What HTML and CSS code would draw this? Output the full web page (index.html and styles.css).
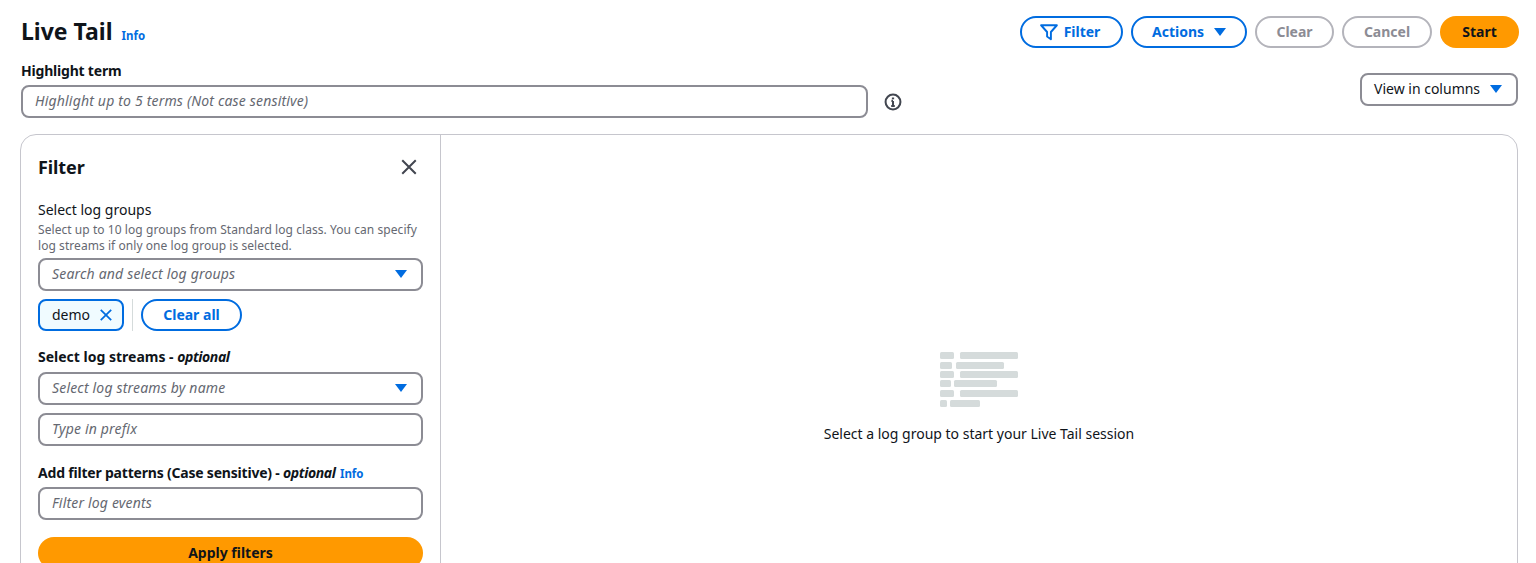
FILE: index.html
```html
<!DOCTYPE html>
<html lang="en">
<head>
<meta charset="utf-8">
<title>Live Tail</title>
<link rel="stylesheet" href="styles.css">
</head>
<body>
<div class="page">
  <header class="top">
    <div class="title-wrap">
      <h1>Live Tail</h1>
      <a class="info info-head">Info</a>
    </div>
    <div class="actions">
      <button class="btn btn-blue btn-filter">
        <svg width="18" height="18" viewBox="0 0 16 16" fill="none" stroke="#006ce0" stroke-width="1.7" stroke-linejoin="round"><path d="M1 2h14L9.7 8v6.4L6.3 12V8z"/></svg>
        Filter
      </button>
      <button class="btn btn-blue btn-actions">Actions <span class="caret"></span></button>
      <button class="btn btn-off btn-clear">Clear</button>
      <button class="btn btn-off btn-cancel">Cancel</button>
      <button class="btn btn-primary btn-start">Start</button>
    </div>
  </header>
  <section class="highlight">
    <div class="hl-left">
      <label class="lbl-strong">Highlight term</label>
      <div class="hl-row">
        <div class="input hl-input">Highlight up to 5 terms (Not case sensitive)</div>
        <svg class="info-icon" width="18" height="18" viewBox="0 0 16 16" fill="none" stroke="#424650" stroke-width="1.8"><circle cx="8" cy="8" r="6.6"/><path d="M8 7v4.5M6.4 11.5h3.2M6.6 7H8"/><path d="M8 4v1.6" stroke-width="2"/></svg>
      </div>
    </div>
    <div class="view-select">View in columns <span class="caret"></span></div>
  </section>
  <main class="panel">
    <aside class="filter">
      <div class="filter-head">
        <h2>Filter</h2>
        <svg width="18" height="18" viewBox="0 0 16 16" fill="none" stroke="#424650" stroke-width="1.8"><path d="M2 2l12 12M14 2L2 14"/></svg>
      </div>
      <div class="lbl-normal">Select log groups</div>
      <div class="hint">Select up to 10 log groups from Standard log class. You can specify log streams if only one log group is selected.</div>
      <div class="input select">Search and select log groups <span class="caret"></span></div>
      <div class="chips">
        <span class="chip">demo
          <svg width="16" height="16" viewBox="0 0 16 16" fill="none" stroke="#006ce0" stroke-width="2"><path d="M2 2l12 12M14 2L2 14"/></svg>
        </span>
        <span class="chip-sep"></span>
        <button class="btn btn-blue btn-clearall">Clear all</button>
      </div>
      <div class="lbl-strong lbl-streams">Select log streams - <em>optional</em></div>
      <div class="input select">Select log streams by name <span class="caret"></span></div>
      <div class="input prefix">Type in prefix</div>
      <div class="lbl-strong lbl-patterns">Add filter patterns (Case sensitive) - <em>optional</em> <a class="info">Info</a></div>
      <div class="input input-filter">Filter log events</div>
      <button class="btn btn-primary btn-apply">Apply filters</button>
    </aside>
    <section class="empty">
      <svg width="78" height="56" viewBox="0 0 78 56" fill="#d5dbdb">
        <rect x="0" y="0" width="14" height="7" rx="1.5"/><rect x="20" y="0" width="58" height="7" rx="1.5"/>
        <rect x="0" y="10" width="12" height="7" rx="1.5"/><rect x="16" y="10" width="48" height="7" rx="1.5"/>
        <rect x="0" y="19" width="14" height="7" rx="1.5"/><rect x="20" y="19" width="58" height="7" rx="1.5"/>
        <rect x="0" y="28" width="11" height="7" rx="1.5"/><rect x="14" y="28" width="43" height="7" rx="1.5"/>
        <rect x="0" y="38" width="14" height="7" rx="1.5"/><rect x="20" y="38" width="58" height="7" rx="1.5"/>
        <rect x="0" y="48" width="7" height="7" rx="1.5"/><rect x="10" y="48" width="30" height="7" rx="1.5"/>
      </svg>
      <p>Select a log group to start your Live Tail session</p>
    </section>
  </main>
</div>
</body>
</html>
```
FILE: styles.css
```css
* { box-sizing: border-box; }
html, body { margin: 0; height: 563px; overflow: hidden; background: #fff; }
body { font-family: "Noto Sans", "Open Sans", sans-serif; font-size: 14px; color: #0f141a; }
.page { padding: 15px 18px 0 21px; }
.top { display: flex; justify-content: space-between; align-items: center; height: 33px; margin-right: -1px; }
.title-wrap { display: flex; align-items: baseline; gap: 8px; }
h1 { margin: 0; font-size: 23px; font-weight: 700; line-height: 33px; }
.info { color: #006ce0; font-size: 11.5px; font-weight: 700; letter-spacing: 0; margin-left: 1px; }
.actions { display: flex; gap: 8px; }
.btn { font-family: inherit; font-size: 14px; font-weight: 700; border-radius: 16px; height: 32px; padding: 0 20px; background: #fff; display: inline-flex; align-items: center; justify-content: center; }
.btn-blue { border: 2px solid #006ce0; color: #006ce0; }
.btn-off { border: 2px solid #b4b4bb; color: #8c8c94; }
.btn-primary { border: 0; background: #ff9900; color: #0f141a; }
.btn-filter { width: 103px; gap: 6px; padding: 0 3px 0 0; }
.btn-actions { width: 116px; gap: 10px; padding: 0; }
.btn-clear { width: 79px; padding: 0; }
.btn-cancel { width: 90px; padding: 0; }
.btn-start { width: 79px; padding: 0; }
.caret { display: inline-block; width: 0; height: 0; border-left: 6px solid transparent; border-right: 6px solid transparent; border-top: 8px solid #006ce0; }
.highlight { display: flex; justify-content: space-between; align-items: flex-start; margin-top: 13px; }
.lbl-strong { font-weight: 700; font-size: 14px; line-height: 20px; display: block; letter-spacing: -.2px; }
.lbl-strong em { letter-spacing: -.4px; }
.hl-row { display: flex; align-items: center; gap: 16px; margin-top: 4px; }
.input { height: 33px; border: 2px solid #8c8c94; border-radius: 8px; padding: 0 12px 2px; font-style: italic; letter-spacing: .18px; color: #656871; display: flex; align-items: center; justify-content: space-between; background: #fff; }
.hl-input { width: 847px; }
.view-select { width: 158px; height: 33px; margin-top: 12px; border: 2px solid #8c8c94; border-radius: 8px; padding: 0 14px 2px 12px; display: flex; align-items: center; justify-content: space-between; }
.panel { display: flex; margin: 16px 0 0 -1px; height: 460px; border: 1px solid #c6c6cd; border-radius: 16px; }
.filter { width: 420px; flex: none; padding: 16px 17px 0 17px; border-right: 1px solid #c6c6cd; }
.filter-head { display: flex; justify-content: space-between; align-items: center; height: 32px; padding-right: 5px; margin-bottom: 17px; }
h2 { margin: 0; font-size: 18px; font-weight: 700; letter-spacing: -.1px; }
.lbl-normal { line-height: 20px; }
.hint { font-size: 12px; line-height: 16px; color: #656871; letter-spacing: .06px; margin-top: 2px; }
.select { margin-top: 4px; }
.select .caret { margin-right: 2px; }
.chips { display: flex; align-items: center; gap: 8px; margin-top: 8px; height: 32px; }
.chip { display: inline-flex; align-items: center; gap: 9px; height: 32px; width: 86px; padding: 0 9px 2px 12px; border: 2px solid #006ce0; border-radius: 8px; background: #f0fbff; }
.chip svg { margin-top: 2px; }
.chip-sep { width: 1px; height: 32px; background: #d5dbdb; }
.btn-clearall { width: 101px; padding: 0 0 2px; }
.lbl-streams { margin-top: 16px; letter-spacing: 0; }
.lbl-streams + .select { margin-top: 5px; }
.prefix { margin-top: 8px; }
.lbl-patterns { margin-top: 17px; margin-bottom: 3px; }
.input-filter { height: 33px; }
.btn-apply { width: 385px; margin-top: 17px; padding: 0 0 2px; }
.empty { flex: 1; display: flex; flex-direction: column; align-items: center; justify-content: flex-start; padding-top: 217px; }
.empty p { margin: 16px 0 0; }
```
